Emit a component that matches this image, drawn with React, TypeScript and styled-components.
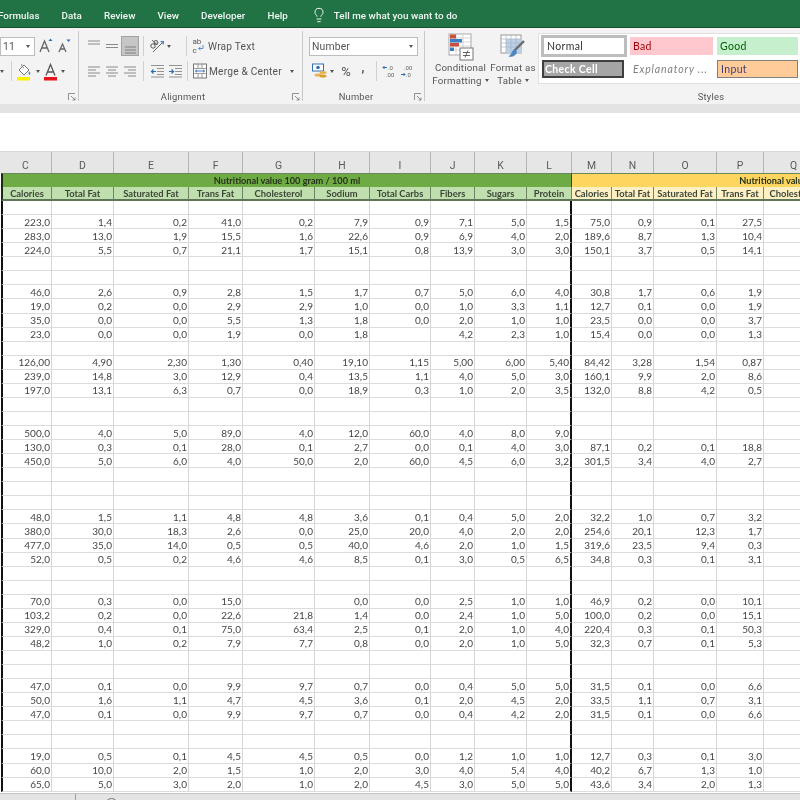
import React from "react";
import styled, { createGlobalStyle } from "styled-components";
import { Lightbulb } from "lucide-react";

const Global = createGlobalStyle`
  html, body { margin: 0; padding: 0; width: 800px; height: 800px; overflow: hidden; background: #fff; }
  #root { width: 800px; height: 800px; overflow: hidden; }
`;

const Page = styled.div`
  width: 800px;
  height: 800px;
  display: flex;
  flex-direction: column;
  overflow: hidden;
  font-family: Roboto, "Liberation Sans", sans-serif;
  filter: blur(0.35px);
`;

const TitleBar = styled.div`
  height: 28px;
  flex: none;
  background: #217346;
  border-bottom: 1px solid #15532f;
  display: flex;
  align-items: center;
  gap: 22px;
  color: #f2f7f3;
  font-size: 9.8px;
  font-weight: 500;
  letter-spacing: 0.05px;
  padding-top: 3px;
  box-sizing: border-box;
`;

const MenuTab = styled.span`
  &:first-child { margin-left: -2px; }
`;

const TellMe = styled.div`
  display: flex;
  align-items: center;
  gap: 7px;
  margin-left: 1px;
`;

const Ribbon = styled.div`
  height: 76px;
  flex: none;
  background: #f3f3f3;
  display: flex;
  overflow: hidden;
`;

const Group = styled.div<{ $w: number; $sep?: boolean }>`
  position: relative;
  width: ${(p) => p.$w}px;
  flex: none;
  display: flex;
  flex-direction: column;
  box-sizing: border-box;
  &::after {
    content: "";
    display: ${(p) => (p.$sep ? "block" : "none")};
    position: absolute;
    right: 0;
    top: 3px;
    bottom: 3px;
    width: 1px;
    background: #c8c8c8;
  }
`;

const Body = styled.div<{ $pl?: number }>`
  flex: 1;
  padding: 7px 0 0 ${(p) => p.$pl ?? 0}px;
  display: flex;
  flex-direction: column;
  gap: 3px;
`;

const ToolRow = styled.div`
  height: 22px;
  display: flex;
  align-items: center;
`;

const GroupLabel = styled.div<{ $pr?: number }>`
  position: relative;
  height: 15px;
  padding-right: ${(p) => p.$pr ?? 0}px;
  text-align: center;
  font-size: 9.4px;
  line-height: 16px;
  letter-spacing: 0.2px;
  color: #555;
`;

const Launcher = styled.svg`
  position: absolute;
  right: 3px;
  top: 4px;
`;

const IconCell = styled.span<{ $w: number; $ml?: number; $active?: boolean }>`
  width: ${(p) => p.$w}px;
  height: 20px;
  margin-left: ${(p) => p.$ml ?? 0}px;
  flex: none;
  display: flex;
  align-items: center;
  justify-content: center;
  box-sizing: border-box;
  background: ${(p) => (p.$active ? "#c6c6c6" : "transparent")};
  border: ${(p) => (p.$active ? "1px solid #a3a3a3" : "none")};
`;

const Caret = styled.span<{ $ml?: number }>`
  flex: none;
  width: 0;
  height: 0;
  margin-left: ${(p) => p.$ml ?? 0}px;
  border-left: 2.5px solid transparent;
  border-right: 2.5px solid transparent;
  border-top: 3px solid #555;
`;

const Sep = styled.span<{ $ml?: number }>`
  flex: none;
  width: 1px;
  height: 20px;
  margin-left: ${(p) => p.$ml ?? 0}px;
  background: #d0d0d0;
`;

const Combo = styled.div<{ $w: number }>`
  width: ${(p) => p.$w}px;
  height: 19px;
  flex: none;
  background: #fff;
  border: 1px solid #bcbcbc;
  box-sizing: border-box;
  display: flex;
  align-items: center;
  justify-content: space-between;
  padding: 0 4px 0 2px;
  font-size: 10.4px;
  letter-spacing: 0.15px;
  color: #555;
`;

const RibbonText = styled.span<{ $ml?: number }>`
  margin-left: ${(p) => p.$ml ?? 0}px;
  font-size: 10.2px;
  letter-spacing: 0.2px;
  color: #555;
  white-space: nowrap;
`;

const Symbol = styled.span<{ $w: number; $size: number; $ml?: number; $bold?: boolean; $lift?: number }>`
  width: ${(p) => p.$w}px;
  margin-left: ${(p) => p.$ml ?? 0}px;
  margin-bottom: ${(p) => p.$lift ?? 0}px;
  flex: none;
  text-align: center;
  font-size: ${(p) => p.$size}px;
  font-weight: ${(p) => (p.$bold ? 700 : 400)};
  color: #555;
`;

const StylesBody = styled.div`
  flex: 1;
  display: flex;
  padding: 5px 0 0 8px;
`;

const BigButton = styled.div<{ $w: number }>`
  width: ${(p) => p.$w}px;
  flex: none;
  display: flex;
  flex-direction: column;
  align-items: center;
  font-size: 9.7px;
  line-height: 13px;
  letter-spacing: 0.2px;
  color: #555;
  white-space: nowrap;
`;

const BigIcon = styled.div`
  height: 28px;
  display: flex;
  align-items: flex-start;
`;

const BigLine = styled.span`
  display: flex;
  align-items: center;
  gap: 3px;
`;

const Gallery = styled.div`
  width: 340px;
  height: 51px;
  flex: none;
  background: #fff;
  border: 1px solid #e0e0e0;
  box-sizing: border-box;
  padding: 1px 0 0 2px;
  display: grid;
  grid-template-columns: 89px 87px 85px 80px;
  grid-template-rows: 22px 20px;
  row-gap: 3px;
`;

const StyleCell = styled.div<{ $bg: string; $fg: string; $bd?: string; $italic?: boolean; $bold?: boolean; $inset?: string }>`
  margin: ${(p) => p.$inset ?? "2px 4px 2px 0"};
  background: ${(p) => p.$bg};
  color: ${(p) => p.$fg};
  border: ${(p) => p.$bd ?? "none"};
  box-sizing: border-box;
  display: flex;
  align-items: center;
  padding-left: ${(p) => (p.$bold ? 1 : 3)}px;
  font-family: Lato, "Liberation Sans", sans-serif;
  font-size: 10.5px;
  letter-spacing: ${(p) => (p.$italic ? 0.85 : 0.35)}px;
  font-style: ${(p) => (p.$italic ? "italic" : "normal")};
  font-weight: ${(p) => (p.$bold ? 700 : 400)};
  white-space: nowrap;
`;

const Strip = styled.div`
  height: 9px;
  flex: none;
  background: #e3e3e3;
`;

const FormulaArea = styled.div`
  height: 38px;
  flex: none;
  background: #fff;
  border-bottom: 1px solid #d8d8d8;
`;

const widths = [52, 62, 75, 54, 72, 55, 61, 44, 52, 45, 40, 42, 63, 47, 60, 230];

const Sheet = styled.div`
  flex: none;
  height: 641px;
  display: grid;
  grid-template-columns: ${widths.map((w) => `${w}px`).join(" ")};
  grid-template-rows: 21px 14px 14px repeat(42, 14.07px);
  background: #fff;
  font-family: Lato, "Liberation Sans", sans-serif;
`;

const ColHead = styled.div`
  background: #e6e6e6;
  border-right: 1px solid #b4b4b4;
  box-sizing: border-box;
  display: flex;
  align-items: flex-end;
  justify-content: center;
  padding-bottom: 0;
  font-family: Roboto, sans-serif;
  font-size: 10.4px;
  line-height: 15px;
  color: #5a5a5a;
`;

const Band = styled.div<{ $span: string; $bg: string; $first?: boolean }>`
  grid-column: ${(p) => p.$span};
  background: ${(p) => p.$bg};
  margin-left: ${(p) => (p.$first ? 1 : 0)}px;
  border-left: ${(p) => (p.$first ? "2px solid #1c2a12" : "none")};
  border-right: 1px solid #34481f;
  border-top: 1px solid #68875a;
  box-sizing: border-box;
  display: flex;
  align-items: center;
  justify-content: center;
  font-size: 9.2px;
  font-weight: 700;
  color: #26321a;
  white-space: nowrap;
`;

const SubHead = styled.div<{ $bg: string; $first?: boolean }>`
  background: ${(p) => p.$bg};
  margin-left: ${(p) => (p.$first ? 1 : 0)}px;
  border-left: ${(p) => (p.$first ? "2px solid #1c2a12" : "none")};
  border-right: 1px solid #6f8566;
  border-bottom: 2px solid #5f7558;
  box-sizing: border-box;
  padding-top: 1px;
  display: flex;
  align-items: center;
  justify-content: center;
  font-size: 9.4px;
  font-weight: 700;
  color: #3c4538;
  white-space: nowrap;
  overflow: hidden;
`;

const Cell = styled.div<{ $first?: boolean; $thick?: boolean }>`
  margin-left: ${(p) => (p.$first ? 1 : 0)}px;
  border-left: ${(p) => (p.$first ? "2px solid #111" : "none")};
  border-right: ${(p) => (p.$thick ? "2px solid #111" : "1px solid #d6d6d6")};
  border-bottom: 1px solid #dcdcdc;
  box-sizing: border-box;
  padding-right: 1px;
  display: flex;
  align-items: center;
  justify-content: flex-end;
  font-size: 10px;
  letter-spacing: 0.05px;
  color: #454545;
  white-space: nowrap;
  overflow: hidden;
`;

const TabBar = styled.div`
  flex: 1;
  background: #e4e4e4;
  border-top: 1px solid #c4c4c4;
  display: flex;
  overflow: hidden;
`;

const TabSlot = styled.div`
  width: 75px;
  flex: none;
  border-right: 1px solid #9f9f9f;
`;

const AddSheet = styled.span`
  width: 11px;
  height: 11px;
  flex: none;
  margin: 4px 0 0 29px;
  border: 1px solid #777;
  border-radius: 50%;
`;

const Launch = () => (
  <Launcher width="8" height="8" viewBox="0 0 8 8" fill="none" stroke="#777" strokeWidth="0.8">
    <path d="M0.5 7V0.5H7M3 3l4 4M7 4.5V7H4.5" />
  </Launcher>
);

const lineSets: Record<string, string> = {
  top: "M2 3h12M2 6h12",
  mid: "M2 6.5h12M2 9.5h12",
  bot: "M3 9h11M3 12h11M3 15h11",
  left: "M2 4h12M2 7h8M2 10h12M2 13h8",
  center: "M2 4h12M4 7h8M2 10h12M4 13h8",
  right: "M2 4h12M6 7h8M2 10h12M6 13h8",
};

const Lines = ({ kind }: { kind: string }) => (
  <svg width="16" height="17" viewBox="0 0 16 17" fill="none" stroke={kind === "bot" ? "#808080" : "#8a8a8a"} strokeWidth="1">
    <path d={lineSets[kind]} />
  </svg>
);

const Grow = ({ up }: { up: boolean }) => (
  <svg width="16" height="18" viewBox="0 0 16 18" fill="none">
    <path d={up ? "M2 15L6.5 4L11 15M3.8 11h5.4" : "M3 15L6.5 7L10 15M4.3 12h4.4"} stroke="#666" strokeWidth="1.3" />
    <path d={up ? "M10.5 4l2-2.5l2 2.5z" : "M10.5 2.5h4l-2 2.5z"} fill="#2f6fb7" />
  </svg>
);

const Bucket = () => (
  <svg width="16" height="19" viewBox="0 0 16 19" fill="none">
    <path d="M3 8L8 3l5 5l-5 5z" fill="#fff" stroke="#777" strokeWidth="1" />
    <path d="M6 2c-1 1 0 3 2 4" stroke="#777" strokeWidth="0.8" />
    <path d="M13 9c1 1.5 2 2.5 1 3.5s-2-.5-1-3.5z" fill="#4d86c5" />
    <rect x="1" y="15" width="13" height="3.5" fill="#fff200" />
  </svg>
);

const FontColor = () => (
  <svg width="15" height="19" viewBox="0 0 15 19" fill="none">
    <path d="M3 13.5L7.5 2.5L12 13.5M4.8 10h5.4" stroke="#555" strokeWidth="1.3" />
    <rect x="1" y="15" width="13" height="3.5" fill="#e8141c" />
  </svg>
);

const Orient = () => (
  <svg width="18" height="18" viewBox="0 0 18 18" fill="none">
    <g stroke="#666" strokeWidth="1">
      <ellipse cx="5" cy="9" rx="2" ry="2.2" transform="rotate(-40 5 9)" />
      <path d="M4 3l4.5 4.5M8 5.5l1.6 1.6" />
      <ellipse cx="8" cy="5.5" rx="1.8" ry="2" transform="rotate(-40 8 5.5)" />
      <path d="M5 15L15 5" />
    </g>
    <path d="M12 4h4v4z" fill="#4d86c5" />
  </svg>
);

const Indent = ({ out }: { out: boolean }) => (
  <svg width="15" height="14" viewBox="0 0 15 14" fill="none">
    <path d="M1 1.5h13M7 4.5h7M7 7.5h7M7 10.5h7M1 13h13" stroke="#888" strokeWidth="0.9" />
    <path d={out ? "M6 7.5H1.5M3.5 5.5l-2 2l2 2" : "M1 7.5h4.5M3.5 5.5l2 2l-2 2"} stroke="#2f6fb7" strokeWidth="1.2" />
  </svg>
);

const Wrap = () => (
  <svg width="13" height="18" viewBox="0 0 13 18" fontFamily="Roboto, sans-serif" fontSize="8" fill="#555">
    <text x="0.5" y="7">ab</text>
    <text x="0.5" y="16">c</text>
    <path d="M11 8v3.5H7M8.5 10l-2 1.5l2 1.5" fill="none" stroke="#4d86c5" strokeWidth="0.9" />
  </svg>
);

const Merge = () => (
  <svg width="14" height="16" viewBox="0 0 14 16" fill="none">
    <rect x="0.5" y="1" width="13" height="14" fill="#fbfbfb" stroke="#777" />
    <path d="M0.5 5.5h13M0.5 10.5h13M5 1v4.5M9 1v4.5M5 10.5V15M9 10.5V15" stroke="#888" strokeWidth="0.8" />
    <path d="M2.5 8h9M4 6.8L2.5 8L4 9.2M10 6.8L11.5 8L10 9.2" stroke="#2f6fb7" strokeWidth="0.9" />
  </svg>
);

const Money = () => (
  <svg width="15" height="16" viewBox="0 0 15 16" fill="none">
    <rect x="0.5" y="1" width="11" height="7" fill="#fff" stroke="#2f6fb7" />
    <circle cx="6" cy="4.5" r="1.8" fill="#2f6fb7" />
    <ellipse cx="11" cy="9.5" rx="3.5" ry="1.6" fill="#e9b44c" />
    <ellipse cx="6" cy="12" rx="3.5" ry="1.6" fill="#e9b44c" />
    <ellipse cx="11" cy="13" rx="3.5" ry="1.6" fill="#d79d2f" />
  </svg>
);

const Decimal = ({ inc }: { inc: boolean }) => (
  <svg width="15" height="14" viewBox="0 0 15 14" fontFamily="Roboto, sans-serif" fontSize="6" fill="#666">
    <text x={inc ? 6 : 4} y="6">{inc ? ".0" : ".00"}</text>
    <text x={inc ? 4 : 6} y="13">{inc ? ".00" : ".0"}</text>
    <path d={inc ? "M5 3.5H1M2.5 2L1 3.5L2.5 5" : "M1 10.5h4M3.5 9L5 10.5L3.5 12"} stroke="#2f6fb7" strokeWidth="1" fill="none" />
  </svg>
);

const CondIcon = () => (
  <svg width="26" height="28" viewBox="0 0 26 28" fill="none">
    <rect x="1" y="1" width="22" height="21" fill="#fff" stroke="#a9a9a9" />
    <path d="M1 5h22M1 9h22M1 13h22M1 17h22M8 1v21M15 1v21" stroke="#c4c4c4" strokeWidth="0.7" />
    <rect x="2" y="1.5" width="6" height="4" fill="#c9503c" />
    <rect x="2" y="6" width="12" height="3.5" fill="#3d7fc1" />
    <rect x="2" y="10" width="9" height="3.5" fill="#c9503c" />
    <rect x="2" y="14.5" width="4" height="3.5" fill="#3d7fc1" />
    <rect x="12" y="15" width="13" height="12" fill="#fff" stroke="#777" />
    <path d="M15 19.5h7M15 22.5h7M20 17.5L17 24.5" stroke="#555" strokeWidth="0.9" />
  </svg>
);

const TableIcon = () => (
  <svg width="26" height="28" viewBox="0 0 26 28" fill="none">
    <rect x="1" y="2" width="20" height="18" fill="#fff" stroke="#9a9a9a" />
    <rect x="6" y="6" width="15" height="14" fill="#bcd0e8" />
    <path d="M1 6h20M1 10h20M1 14h20M6 2v18M11 2v18M16 2v18" stroke="#a8b4c2" strokeWidth="0.7" />
    <path d="M24 8L14 18" stroke="#6a6a6a" strokeWidth="2.4" />
    <path d="M14.5 16.5c-3 1-2 4-6 7c4 1 8-1 8.5-5z" fill="#4d86c5" />
  </svg>
);

const cols = ["C", "D", "E", "F", "G", "H", "I", "J", "K", "L", "M", "N", "O", "P", "Q", ""];
const subs = ["Calories", "Total Fat", "Saturated Fat", "Trans Fat", "Cholesterol", "Sodium", "Total Carbs", "Fibers", "Sugars", "Protein"];

const data: Record<number, string> = {
  1: "223,0 1,4 0,2 41,0 0,2 7,9 0,9 7,1 5,0 1,5 75,0 0,9 0,1 27,5",
  2: "283,0 13,0 1,9 15,5 1,6 22,6 0,9 6,9 4,0 2,0 189,6 8,7 1,3 10,4",
  3: "224,0 5,5 0,7 21,1 1,7 15,1 0,8 13,9 3,0 3,0 150,1 3,7 0,5 14,1",
  6: "46,0 2,6 0,9 2,8 1,5 1,7 0,7 5,0 6,0 4,0 30,8 1,7 0,6 1,9",
  7: "19,0 0,2 0,0 2,9 2,9 1,0 0,0 1,0 3,3 1,1 12,7 0,1 0,0 1,9",
  8: "35,0 0,0 0,0 5,5 1,3 1,8 0,0 2,0 1,0 1,0 23,5 0,0 0,0 3,7",
  9: "23,0 0,0 0,0 1,9 0,0 1,8 - 4,2 2,3 1,0 15,4 0,0 0,0 1,3",
  11: "126,00 4,90 2,30 1,30 0,40 19,10 1,15 5,00 6,00 5,40 84,42 3,28 1,54 0,87",
  12: "239,0 14,8 3,0 12,9 0,4 13,5 1,1 4,0 5,0 3,0 160,1 9,9 2,0 8,6",
  13: "197,0 13,1 6,3 0,7 0,0 18,9 0,3 1,0 2,0 3,5 132,0 8,8 4,2 0,5",
  16: "500,0 4,0 5,0 89,0 4,0 12,0 60,0 4,0 8,0 9,0",
  17: "130,0 0,3 0,1 28,0 0,1 2,7 0,0 0,1 4,0 3,0 87,1 0,2 0,1 18,8",
  18: "450,0 5,0 6,0 4,0 50,0 2,0 60,0 4,5 6,0 3,2 301,5 3,4 4,0 2,7 33,5",
  22: "48,0 1,5 1,1 4,8 4,8 3,6 0,1 0,4 5,0 2,0 32,2 1,0 0,7 3,2",
  23: "380,0 30,0 18,3 2,6 0,0 25,0 20,0 4,0 2,0 2,0 254,6 20,1 12,3 1,7",
  24: "477,0 35,0 14,0 0,5 0,5 40,0 4,6 2,0 1,0 1,5 319,6 23,5 9,4 0,3",
  25: "52,0 0,5 0,2 4,6 4,6 8,5 0,1 3,0 0,5 6,5 34,8 0,3 0,1 3,1",
  28: "70,0 0,3 0,0 15,0 - 0,0 0,0 2,5 1,0 1,0 46,9 0,2 0,0 10,1",
  29: "103,2 0,2 0,0 22,6 21,8 1,4 0,0 2,4 1,0 5,0 100,0 0,2 0,0 15,1 21,1",
  30: "329,0 0,4 0,1 75,0 63,4 2,5 0,1 2,0 1,0 4,0 220,4 0,3 0,1 50,3 42,5",
  31: "48,2 1,0 0,2 7,9 7,7 0,8 0,0 2,0 1,0 5,0 32,3 0,7 0,1 5,3",
  34: "47,0 0,1 0,0 9,9 9,7 0,7 0,0 0,4 5,0 5,0 31,5 0,1 0,0 6,6",
  35: "50,0 1,6 1,1 4,7 4,5 3,6 0,1 2,0 4,5 2,0 33,5 1,1 0,7 3,1",
  36: "47,0 0,1 0,0 9,9 9,7 0,7 0,0 0,4 4,2 2,0 31,5 0,1 0,0 6,6",
  39: "19,0 0,5 0,1 4,5 4,5 0,5 0,0 1,2 1,0 1,0 12,7 0,3 0,1 3,0",
  40: "60,0 10,0 2,0 1,5 1,0 2,0 3,0 4,0 5,4 4,0 40,2 6,7 1,3 1,0",
  41: "65,0 5,0 3,0 2,0 1,0 2,0 4,5 3,0 5,0 5,0 43,6 3,4 2,0 1,3",
};

const rowIndexes = Array.from({ length: 42 }, (_, i) => i);

export default function App() {
  return (
    <>
      <Global />
      <Page>
        <TitleBar>
          <MenuTab>Formulas</MenuTab>
          <MenuTab>Data</MenuTab>
          <MenuTab>Review</MenuTab>
          <MenuTab>View</MenuTab>
          <MenuTab>Developer</MenuTab>
          <MenuTab>Help</MenuTab>
          <TellMe>
            <Lightbulb size={16} strokeWidth={1.5} color="#f2f7f3" />
            <span>Tell me what you want to do</span>
          </TellMe>
        </TitleBar>

        <Ribbon>
          <Group $w={79} $sep>
            <Body>
              <ToolRow>
                <Combo $w={35}>
                  <span>11</span>
                  <Caret />
                </Combo>
                <IconCell $w={18} $ml={2}><Grow up /></IconCell>
                <IconCell $w={18}><Grow up={false} /></IconCell>
              </ToolRow>
              <ToolRow>
                <Caret $ml={0} />
                <Sep $ml={7} />
                <IconCell $w={18} $ml={3}><Bucket /></IconCell>
                <Caret $ml={3} />
                <IconCell $w={18} $ml={1}><FontColor /></IconCell>
                <Caret $ml={2} />
              </ToolRow>
            </Body>
            <GroupLabel>
              &nbsp;
              <Launch />
            </GroupLabel>
          </Group>

          <Group $w={224} $sep>
            <Body $pl={6}>
              <ToolRow>
                <IconCell $w={18}><Lines kind="top" /></IconCell>
                <IconCell $w={18}><Lines kind="mid" /></IconCell>
                <IconCell $w={18} $active><Lines kind="bot" /></IconCell>
                <Sep $ml={4} />
                <IconCell $w={20} $ml={3}><Orient /></IconCell>
                <Caret />
                <Sep $ml={15} />
                <IconCell $w={14} $ml={4}><Wrap /></IconCell>
                <RibbonText $ml={3}>Wrap Text</RibbonText>
              </ToolRow>
              <ToolRow>
                <IconCell $w={18}><Lines kind="left" /></IconCell>
                <IconCell $w={18}><Lines kind="center" /></IconCell>
                <IconCell $w={18}><Lines kind="right" /></IconCell>
                <Sep $ml={4} />
                <IconCell $w={18} $ml={4}><Indent out /></IconCell>
                <IconCell $w={18}><Indent out={false} /></IconCell>
                <Sep $ml={3} />
                <IconCell $w={14} $ml={5}><Merge /></IconCell>
                <RibbonText $ml={2}>Merge &amp; Center</RibbonText>
                <Caret $ml={8} />
              </ToolRow>
            </Body>
            <GroupLabel $pr={16}>
              Alignment
              <Launch />
            </GroupLabel>
          </Group>

          <Group $w={122} $sep>
            <Body $pl={6}>
              <ToolRow>
                <Combo $w={109}>
                  <span>Number</span>
                  <Caret />
                </Combo>
              </ToolRow>
              <ToolRow>
                <IconCell $w={16} $ml={2}><Money /></IconCell>
                <Caret $ml={3} />
                <Symbol $w={16} $size={13} $ml={4}>%</Symbol>
                <Symbol $w={10} $size={12} $ml={4} $bold $lift={7}>,</Symbol>
                <Sep $ml={8} />
                <IconCell $w={18} $ml={3}><Decimal inc /></IconCell>
                <IconCell $w={18}><Decimal inc={false} /></IconCell>
              </ToolRow>
            </Body>
            <GroupLabel $pr={16}>
              Number
              <Launch />
            </GroupLabel>
          </Group>

          <Group $w={572}>
            <StylesBody>
              <BigButton $w={55}>
                <BigIcon><CondIcon /></BigIcon>
                <span>Conditional</span>
                <BigLine>Formatting <Caret /></BigLine>
              </BigButton>
              <BigButton $w={50}>
                <BigIcon><TableIcon /></BigIcon>
                <span>Format as</span>
                <BigLine>Table <Caret /></BigLine>
              </BigButton>
              <Gallery>
                <StyleCell $bg="#fff" $fg="#333" $bd="3px solid #bdbdbd" $inset="0 3px 0 0">Normal</StyleCell>
                <StyleCell $bg="#ffc7ce" $fg="#9c0006">Bad</StyleCell>
                <StyleCell $bg="#c6efce" $fg="#006100">Good</StyleCell>
                <span />
                <StyleCell $bg="#a5a5a5" $fg="#fff" $bd="2px solid #3f3f3f" $bold $inset="0 6px 2px 1px">Check Cell</StyleCell>
                <StyleCell $bg="#fff" $fg="#7f7f7f" $italic $inset="0 4px 2px 0">Explanatory ...</StyleCell>
                <StyleCell $bg="#ffcc99" $fg="#3f3f76" $bd="1px solid #7f7f7f" $inset="0 4px 2px 0">Input</StyleCell>
                <span />
              </Gallery>
            </StylesBody>
            <GroupLabel>Styles</GroupLabel>
          </Group>
        </Ribbon>

        <Strip />
        <FormulaArea />

        <Sheet>
          {cols.map((c, i) => (
            <ColHead key={i}>{c}</ColHead>
          ))}
          <Band $span="1 / span 10" $bg="#6fab45" $first>Nutritional value 100 gram / 100 ml</Band>
          <Band $span="11 / span 6" $bg="#fdd55f">Nutritional value 100 gram / 100 ml</Band>
          {cols.map((_, i) => (
            <SubHead key={i} $first={i === 0} $bg={i < 10 ? "#c0dfae" : "#fff0c4"}>
              {i === 15 ? "" : subs[i % 10]}
            </SubHead>
          ))}
          {rowIndexes.map((r) => {
            const raw = data[r] ? data[r].split(" ") : [];
            return cols.map((_, i) => (
              <Cell key={`${r}-${i}`} $first={i === 0} $thick={i === 9}>
                {raw[i] && raw[i] !== "-" ? raw[i] : ""}
              </Cell>
            ));
          })}
        </Sheet>

        <TabBar>
          <TabSlot />
          <AddSheet />
        </TabBar>
      </Page>
    </>
  );
}
